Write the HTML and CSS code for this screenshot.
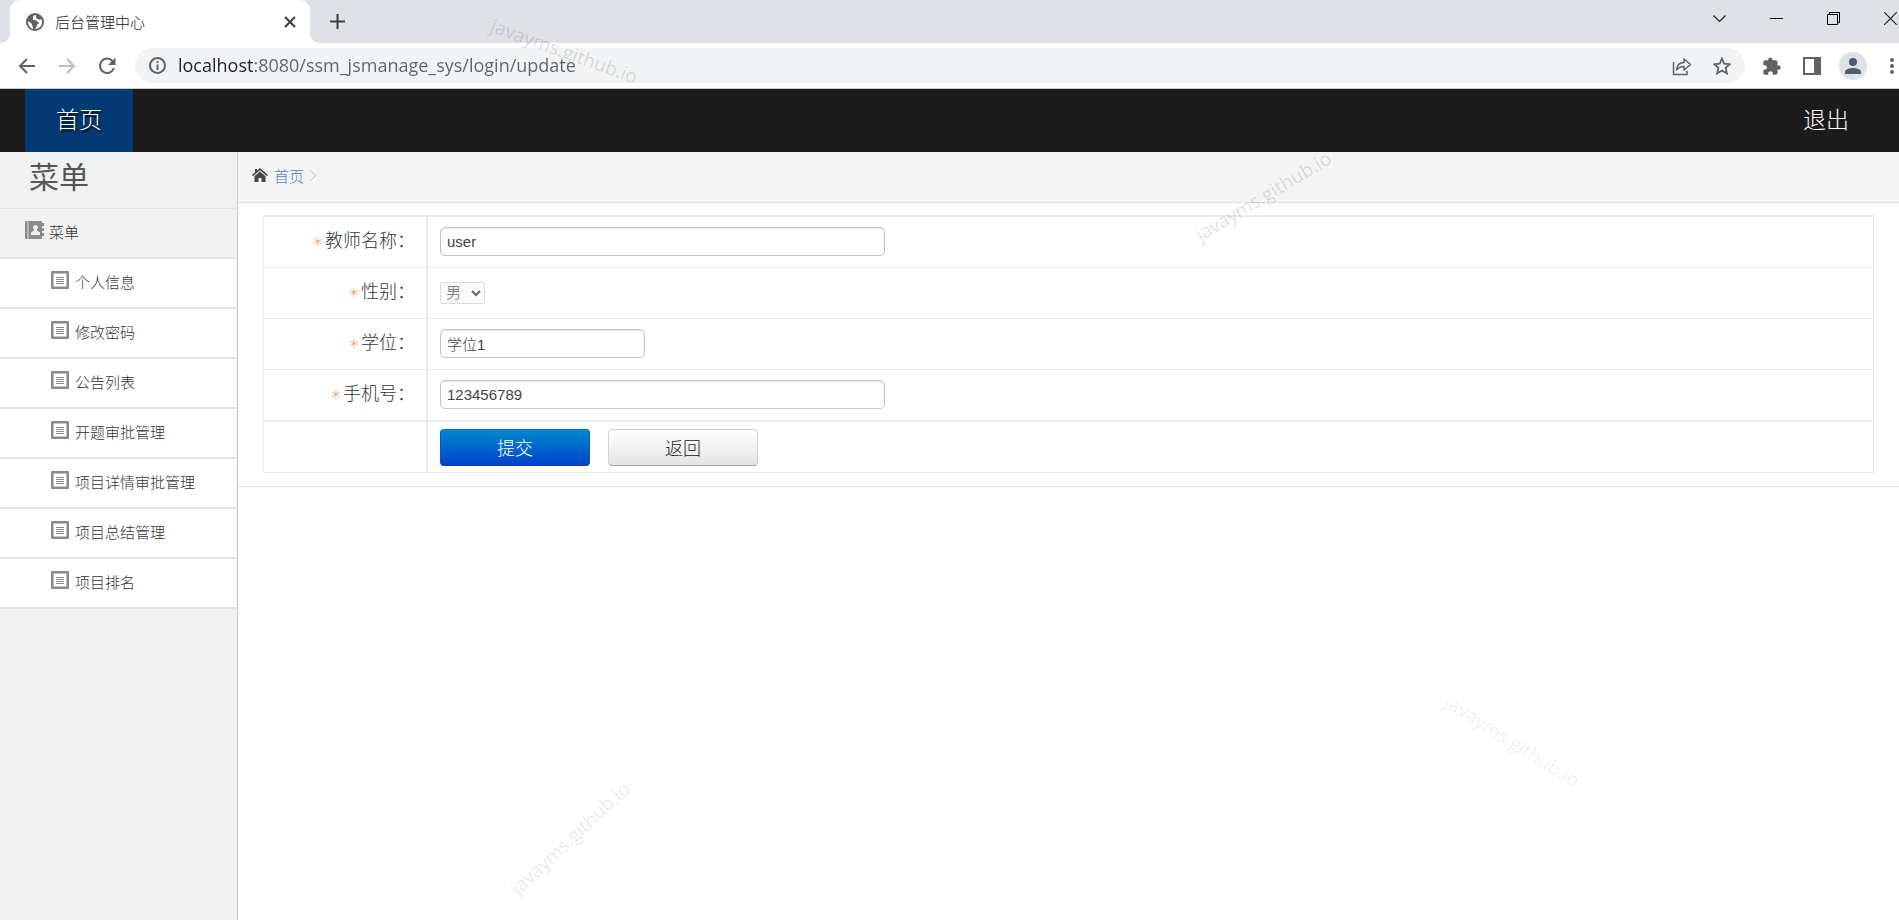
FILE: index.html
```html
<!DOCTYPE html>
<html lang="zh-CN">
<head>
    <meta charset="UTF-8">
    <meta name="viewport" content="width=device-width, initial-scale=1.0">
    <title>后台管理中心</title>
    <link rel="stylesheet" href="styles.css">
</head>
<body>
    <!-- Shared icons -->
    <svg class="icon-defs" aria-hidden="true">
        <symbol id="icon-list" viewBox="0 0 18 18">
            <path fill="#8a8a8a" fill-rule="evenodd" d="M1 0h16a1 1 0 0 1 1 1v16a1 1 0 0 1-1 1H1a1 1 0 0 1-1-1V1a1 1 0 0 1 1-1zM2.500 2.500v13h13v-13z"/>
            <path stroke="#8a8a8a" d="M5 6.500h8M5 8.500h8M5 10.500h8M5 12.500h8"/>
        </symbol>
    </svg>

    <!-- Tab strip -->
    <div class="tab-strip">
        <div class="tab">
            <svg class="favicon" viewBox="0 0 18 18" aria-hidden="true">
                <circle cx="9" cy="9" r="9" fill="#5f6368"/>
                <path fill="#fff" d="M10 2c-2 0-3 1-3 2 1 1-1 2 0 3 2 0 3 0 4 1 0 1 2 1 2 2s-2 1-2 2-1 3-2 4c4 0 7-3 7-7 0-1 0-2-1-3-1 1-2 1-3 0-1 0-2-1-2-2zM2 8c0 4 2 7 5 8v-2c-1-1-1-2-1-3C5 10 3 9 2 8z"/>
            </svg>
            <span class="tab-title">后台管理中心</span>
            <button class="icon-btn tab-close" aria-label="关闭标签页">
                <svg width="12" height="12" viewBox="0 0 12 12"><path d="M1 1l10 10M11 1L1 11" stroke="#3c4043" stroke-width="2"/></svg>
            </button>
        </div>
        <button class="icon-btn new-tab" aria-label="新标签页">
            <svg width="15" height="15" viewBox="0 0 15 15"><path d="M7.500 0v15M0 7.500h15" stroke="#3c4043" stroke-width="2"/></svg>
        </button>
        <div class="window-buttons">
            <button class="icon-btn" aria-label="搜索标签页">
                <svg width="13" height="13" viewBox="0 0 13 13"><path d="M0.500 3.500l6 6 6-6" fill="none" stroke="#222" stroke-width="1.200"/></svg>
            </button>
            <button class="icon-btn" aria-label="最小化">
                <svg width="13" height="13" viewBox="0 0 13 13"><path d="M0 6.500h13" stroke="#000"/></svg>
            </button>
            <button class="icon-btn" aria-label="还原">
                <svg width="13" height="13" viewBox="0 0 13 13"><path d="M0.500 2.500h10v10h-10zM2.500 2.500v-2h10v10h-2" fill="none" stroke="#000"/></svg>
            </button>
            <button class="icon-btn" aria-label="关闭">
                <svg width="13" height="13" viewBox="0 0 13 13"><path d="M0 0l13 13M13 0L0 13" stroke="#222" stroke-width="1.200"/></svg>
            </button>
        </div>
    </div>

    <!-- Address bar -->
    <div class="toolbar">
        <div class="nav-buttons">
            <button class="icon-btn" aria-label="后退">
                <svg width="18" height="18" viewBox="0 0 18 18"><path d="M17 9H2M9 2L2 9l7 7" fill="none" stroke="#5f6368" stroke-width="2"/></svg>
            </button>
            <button class="icon-btn" aria-label="前进">
                <svg width="18" height="18" viewBox="0 0 18 18"><path d="M1 9h15M9 2l7 7-7 7" fill="none" stroke="#bcbfc3" stroke-width="2"/></svg>
            </button>
            <button class="icon-btn" aria-label="刷新">
                <svg width="18" height="18" viewBox="0 0 18 18"><path d="M14.500 4A7.200 7.200 0 1 0 16 11" fill="none" stroke="#5f6368" stroke-width="2"/><path d="M17.500 0.500V8H10z" fill="#5f6368"/></svg>
            </button>
        </div>
        <div class="address">
            <svg width="17" height="17" viewBox="0 0 17 17" aria-hidden="true"><circle cx="8.500" cy="8.500" r="7.500" fill="none" stroke="#5f6368" stroke-width="2"/><path d="M8.500 7.500V13M8.500 4v2" stroke="#5f6368" stroke-width="2"/></svg>
            <input type="text" class="url" aria-label="地址" value="localhost:8080/ssm_jsmanage_sys/login/update">
            <button class="icon-btn" aria-label="分享">
                <svg width="20" height="20" viewBox="0 0 20 20"><path d="M1.500 6v12.500H15V15" fill="none" stroke="#5f6368" stroke-width="1.500"/><path d="M4.500 14C5 9 7.500 6.500 12 6.500V3l6.500 5.500L12 14v-3.500c-3.500 0-5.500 1-7.500 3.500z" fill="none" stroke="#5f6368" stroke-width="1.500" stroke-linejoin="round"/></svg>
            </button>
            <button class="icon-btn" aria-label="收藏">
                <svg width="18" height="18" viewBox="0 0 18 18"><path d="M9 1.500l2.200 5.200 5.600.5-4.200 3.700 1.300 5.500L9 13.500l-4.900 2.900 1.300-5.500-4.200-3.700 5.600-.5z" fill="none" stroke="#5f6368" stroke-width="1.800"/></svg>
            </button>
        </div>
        <div class="tool-buttons">
            <button class="icon-btn" aria-label="扩展程序">
                <svg width="18" height="18" viewBox="0 0 18 18"><path fill="#5f6368" d="M15.700 8.500h-1.200V5a1.700 1.700 0 0 0-1.700-1.700H9.500V2.200a2.200 2.200 0 0 0-4.300 0v1.100H2A1.700 1.700 0 0 0 .4 5v3.200h1.200a2.300 2.300 0 0 1 0 4.600H.4V16A1.700 1.700 0 0 0 2 17.700h3.200v-1.200a2.300 2.300 0 0 1 4.600 0v1.200h3a1.700 1.700 0 0 0 1.700-1.700v-3.300h1.200a2.100 2.100 0 0 0 0-4.200z"/></svg>
            </button>
            <button class="icon-btn" aria-label="侧边栏">
                <svg width="18" height="18" viewBox="0 0 18 18"><path fill="#5f6368" fill-rule="evenodd" d="M0 0h18v18H0zM2 2v14h9V2z"/></svg>
            </button>
            <button class="icon-btn avatar" aria-label="用户">
                <svg width="16" height="16" viewBox="0 0 16 16"><circle cx="8" cy="4" r="4" fill="#4d5b70"/><path d="M0 16v-2c0-3 5-4 8-4s8 1 8 4v2z" fill="#4d5b70"/></svg>
            </button>
            <button class="icon-btn" aria-label="更多">
                <svg width="4" height="16" viewBox="0 0 4 16"><g fill="#5f6368"><circle cx="2" cy="2" r="2"/><circle cx="2" cy="8" r="2"/><circle cx="2" cy="14" r="2"/></g></svg>
            </button>
        </div>
    </div>

    <!-- Top navigation -->
    <nav class="top-nav">
        <a href="#" class="active">首页</a>
        <a href="#">退出</a>
    </nav>

    <div class="page">
        <!-- Left menu -->
        <aside class="sidebar">
            <h1>菜单</h1>
            <h2>
                <svg width="20" height="18" viewBox="0 0 20 18" aria-hidden="true">
                    <path fill="#8a8a8a" d="M1 0h1v18H1a1 1 0 0 1-1-1V1a1 1 0 0 1 1-1zM4 0h12a1 1 0 0 1 1 1v1h2v3h-2v2h2v3h-2v2h2v3h-2v2a1 1 0 0 1-1 1H4z"/>
                    <path fill="#b5b5b5" d="M2 0h2v18H2z"/>
                    <path fill="#f1f1f1" d="M10.500 4a2.500 2.500 0 0 1 1.500 4.500v1l3 2V14H6v-2.500l3-2v-1A2.500 2.500 0 0 1 10.500 4z"/>
                </svg>
                菜单
            </h2>
            <ul>
                <li><a href="#"><svg><use href="#icon-list"/></svg>个人信息</a></li>
                <li><a href="#"><svg><use href="#icon-list"/></svg>修改密码</a></li>
                <li><a href="#"><svg><use href="#icon-list"/></svg>公告列表</a></li>
                <li><a href="#"><svg><use href="#icon-list"/></svg>开题审批管理</a></li>
                <li><a href="#"><svg><use href="#icon-list"/></svg>项目详情审批管理</a></li>
                <li><a href="#"><svg><use href="#icon-list"/></svg>项目总结管理</a></li>
                <li><a href="#"><svg><use href="#icon-list"/></svg>项目排名</a></li>
            </ul>
        </aside>

        <!-- Content -->
        <main>
            <div class="breadcrumb">
                <svg width="16" height="14" viewBox="0 0 16 14" aria-hidden="true"><path fill="#4a4444" d="M8 0l8 7-1 1.200-7-6-7 6L0 7l3-2.600V1h2v1.600z"/><path fill="#4a4444" d="M8 3.500l5.500 4.700V14H9.500v-4h-3v4h-4V8.200z"/></svg>
                <a href="#">首页</a>
                <svg width="6" height="11" viewBox="0 0 6 11" aria-hidden="true"><path d="M0.500 0.500l5 5-5 5" fill="none" stroke="#b4bfd2"/></svg>
            </div>
            <form class="edit-form">
                <table>
                    <tr>
                        <th><span class="required">*</span><label for="name">教师名称：</label></th>
                        <td><input type="text" id="name" class="wide" value="user"></td>
                    </tr>
                    <tr>
                        <th><span class="required">*</span><label for="sex">性别：</label></th>
                        <td>
                            <select id="sex">
                                <option>男</option>
                                <option>女</option>
                            </select>
                        </td>
                    </tr>
                    <tr>
                        <th><span class="required">*</span><label for="degree">学位：</label></th>
                        <td><input type="text" id="degree" value="学位1"></td>
                    </tr>
                    <tr>
                        <th><span class="required">*</span><label for="phone">手机号：</label></th>
                        <td><input type="text" id="phone" class="wide" value="123456789"></td>
                    </tr>
                    <tr class="actions">
                        <th></th>
                        <td>
                            <div class="buttons">
                                <button type="submit" class="btn btn-primary">提交</button>
                                <button type="button" class="btn">返回</button>
                            </div>
                        </td>
                    </tr>
                </table>
            </form>
        </main>
    </div>

    <!-- Watermarks -->
    <span class="watermark mark-1">javayms.github.io</span>
    <span class="watermark mark-2">javayms.github.io</span>
    <span class="watermark mark-3">javayms.github.io</span>
    <span class="watermark mark-4">javayms.github.io</span>
</body>
</html>
```
FILE: styles.css
```css
/* General Styles */
* {
    box-sizing: border-box;
}
body {
    position: relative;
    margin: 0;
    min-height: 100vh;
    display: flex;
    flex-direction: column;
    overflow: hidden;
    font-family: "Liberation Sans", "Noto Sans CJK SC", sans-serif;
    font-size: 15px;
    font-weight: 300;
    color: #333;
    background: #fff;
}
a {
    text-decoration: none;
}
svg {
    display: block;
    flex: none;
}
.icon-defs {
    position: absolute;
    width: 0;
    height: 0;
}
.icon-btn {
    display: flex;
    align-items: center;
    justify-content: center;
    padding: 0;
    border: none;
    background: none;
    flex: none;
}

/* Tab Strip */
.tab-strip {
    display: flex;
    height: 43px;
    padding-left: 10px;
    background: #dee1e6;
}
.tab {
    position: relative;
    display: flex;
    align-items: center;
    width: 300px;
    height: 43px;
    padding: 0 14px 0 16px;
    border-radius: 10px 10px 0 0;
    background: #fff;
}
.tab::before,
.tab::after {
    content: "";
    position: absolute;
    bottom: 0;
    width: 10px;
    height: 10px;
}
.tab::before {
    left: -10px;
    background: radial-gradient(circle at 0 0, #dee1e6 10px, #fff 10px);
}
.tab::after {
    right: -10px;
    background: radial-gradient(circle at 100% 0, #dee1e6 10px, #fff 10px);
}
.favicon {
    width: 18px;
    height: 18px;
}
.tab-title {
    margin-left: 11px;
    color: #202124;
}
.tab-close {
    margin-left: auto;
}
.new-tab {
    margin-left: 20px;
}
.window-buttons {
    display: flex;
    gap: 44px;
    height: 36px;
    margin-left: auto;
    padding-right: 2px;
}

/* Toolbar */
.toolbar {
    display: flex;
    align-items: center;
    height: 46px;
    padding: 0 5px 0 18px;
    border-bottom: 1px solid #ccc;
    background: #fff;
}
.nav-buttons {
    display: flex;
    gap: 22px;
}
.address {
    display: flex;
    align-items: center;
    flex: 1;
    gap: 21px;
    height: 35px;
    margin: 0 18px 0 19px;
    padding: 0 14px;
    border-radius: 18px;
    background: #f1f3f4;
}
.url {
    flex: 1;
    min-width: 0;
    margin-left: -9px;
    padding: 0 0 2px;
    border: none;
    outline: none;
    font-family: "Open Sans", "Noto Sans", sans-serif;
    font-size: 18px;
    font-weight: 400;
    color: transparent;
    background: linear-gradient(to right, #202124 77px, #5f6368 77px);
    -webkit-background-clip: text;
    background-clip: text;
}
.tool-buttons {
    display: flex;
    align-items: center;
    gap: 22px;
}
.avatar {
    width: 28px;
    height: 28px;
    margin: 0 1px 0 -4px;
    border-radius: 50%;
    background: #dee1e6;
}

/* Top Navigation */
.top-nav {
    display: flex;
    justify-content: space-between;
    height: 63px;
    padding: 0 25px;
    background: #1b1b1b;
}
.top-nav a {
    padding: 0 25px 0 31px;
    font-size: 23px;
    line-height: 62px;
    color: #fff;
}
.top-nav .active {
    padding-right: 31px;
    background: #043a73;
    text-shadow: 1px 2px 2px #000;
}

/* Page */
.page {
    display: flex;
    flex: 1;
}

/* Left Menu */
.sidebar {
    width: 238px;
    padding-right: 1px;
    border-right: 1px solid #c8c8c8;
    background: #f1f1f1;
}
.sidebar h1 {
    margin: 0;
    padding: 2px 29px 7px;
    border-bottom: 1px solid #e3e3e3;
    font-size: 30px;
    font-weight: 400;
    line-height: 47px;
    color: #555;
}
.sidebar h2 {
    display: flex;
    gap: 4px;
    height: 50px;
    margin: 0;
    padding: 12px 25px 0;
    border-bottom: 2px solid #e3e3e3;
    font-size: 15px;
    font-weight: 300;
    line-height: 24px;
}
.sidebar ul {
    margin: 0;
    padding: 0;
    list-style: none;
}
.sidebar li {
    border-bottom: 2px solid #e3e3e3;
    background: #fff;
}
.sidebar li a {
    display: flex;
    gap: 6px;
    height: 48px;
    padding: 12px 0 0 51px;
    line-height: 24px;
    color: #333;
}
.sidebar li svg {
    width: 18px;
    height: 18px;
}

/* Content */
main {
    flex: 1;
    min-width: 0;
}
.breadcrumb {
    display: flex;
    align-items: center;
    gap: 6px;
    height: 51px;
    padding: 0 14px 4px;
    border-bottom: 1px solid #e0e0e0;
    background: #f4f4f4;
}
.breadcrumb a {
    color: #4a80c4;
}
.edit-form {
    padding: 12px 25px 13px;
    border-bottom: 1px solid #e0e0e0;
}
.edit-form table {
    width: 100%;
    border-collapse: separate;
    border-spacing: 0;
    border: 1px solid #ebebeb;
    border-width: 2px 1px 0 1px;
}
.edit-form th,
.edit-form td {
    height: 51px;
    padding: 0 12px 1px;
    border-bottom: 1px solid #ebebeb;
}
.edit-form th {
    width: 162px;
    padding: 0 11px 2px 0;
    font-size: 18px;
    font-weight: 300;
    line-height: 26px;
    text-align: right;
    white-space: nowrap;
}
.edit-form td {
    border-left: 2px solid #ebebeb;
}
.edit-form .actions th,
.edit-form .actions td {
    height: 52px;
    padding-bottom: 0;
    border-top: 1px solid #ebebeb;
}
.required {
    margin-right: 2px;
    font-family: "DejaVu Sans", sans-serif;
    font-size: 20px;
    line-height: 20px;
    vertical-align: -4px;
    color: #f60;
}
.edit-form input {
    display: block;
    width: 205px;
    height: 29px;
    padding: 0 6px;
    border: 1px solid #c4c4c4;
    border-radius: 5px;
    outline: none;
    font-family: inherit;
    font-size: 15px;
    font-weight: 300;
    color: #444;
    background: #fff;
    box-shadow: inset 0 1px 2px rgba(0, 0, 0, 0.1);
}
.edit-form .wide {
    width: 445px;
}
.edit-form select {
    display: block;
    width: 45px;
    height: 22px;
    padding: 0 1px;
    border: 1px solid #ddd;
    border-radius: 2px;
    font-family: inherit;
    font-size: 15px;
    font-weight: 300;
    color: #666;
    background: #fafafa;
}

/* Buttons */
.buttons {
    display: flex;
    gap: 18px;
    padding-top: 1px;
}
.btn {
    width: 150px;
    height: 37px;
    padding: 0 0 2px;
    border: 1px solid #d4d4d4;
    border-bottom-color: #a2a2a2;
    border-radius: 4px;
    font-family: inherit;
    font-size: 18px;
    font-weight: 300;
    color: #222;
    background: linear-gradient(#fff, #e4e4e4);
}
.btn-primary {
    border-color: #0077c0 #0058c8 #003ebb;
    color: #fff;
    background: linear-gradient(#0088cc, #0044cc);
}

/* Watermarks */
.watermark {
    position: absolute;
    font-family: "Open Sans", "Noto Sans", sans-serif;
    font-size: 19px;
    font-weight: 400;
    line-height: 28px;
    white-space: nowrap;
    color: rgba(0, 0, 0, 0.13);
    pointer-events: none;
}
.mark-1 {
    top: 37px;
    left: 487px;
    transform: rotate(20deg);
}
.mark-2 {
    top: 182px;
    left: 1186px;
    transform: rotate(-31deg);
}
.mark-3 {
    top: 824px;
    left: 493px;
    color: rgba(0, 0, 0, 0.1);
    transform: rotate(-43deg);
}
.mark-4 {
    top: 727px;
    left: 1435px;
    color: rgba(0, 0, 0, 0.07);
    transform: rotate(32deg);
}
```
